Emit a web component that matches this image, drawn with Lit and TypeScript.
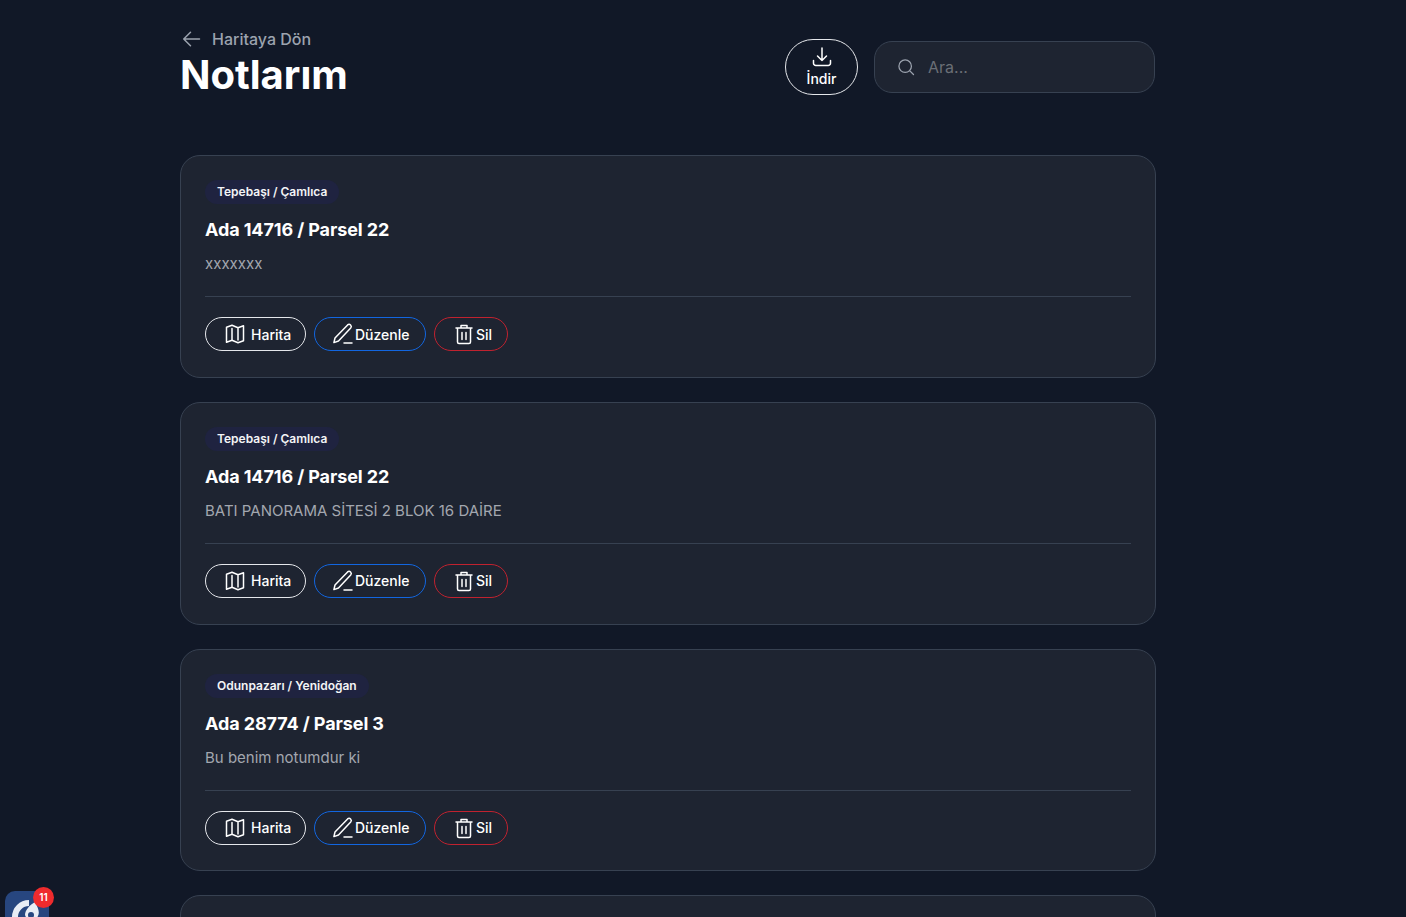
import { LitElement, html, css, svg } from 'lit';
import { customElement, property } from 'lit/decorators.js';

interface Note {
  district: string;
  title: string;
  body: string;
}

const NOTES: Note[] = [
  { district: 'Tepebaşı / Çamlıca', title: 'Ada 14716 / Parsel 22', body: 'xxxxxxx' },
  { district: 'Tepebaşı / Çamlıca', title: 'Ada 14716 / Parsel 22', body: 'BATI PANORAMA SİTESİ 2 BLOK 16 DAİRE' },
  { district: 'Odunpazarı / Yenidoğan', title: 'Ada 28774 / Parsel 3', body: 'Bu benim notumdur ki' },
  { district: 'Tepebaşı / Çamlıca', title: 'Ada 14716 / Parsel 22', body: 'xxxxxxx' },
];

const icon = (size: number, body: unknown) => html`<svg
  width=${size}
  height=${size}
  viewBox="0 0 24 24"
  fill="none"
  stroke="currentColor"
  stroke-width="1.5"
  stroke-linecap="round"
  stroke-linejoin="round"
>${body}</svg>`;

const arrowLeft = svg`<path d="M19.5 12h-15M10.5 5.25 3.75 12l6.75 6.75" />`;
const download = svg`<path d="M3.5 15.5v2.75A2.25 2.25 0 0 0 5.75 20.5h12.5a2.25 2.25 0 0 0 2.25-2.25V15.5M12 3v12.5M7.5 11l4.5 4.5 4.5-4.5" />`;
const search = svg`<path d="m21 21-4.7-4.7M18.5 11a7.5 7.5 0 1 1-15 0 7.5 7.5 0 0 1 15 0Z" />`;
const map = svg`<path d="M9 6.5V18M15 6v12M3.5 5.2 9 3.3l6 2.4 5.5-1.9v15l-5.5 1.9-6-2.4-5.5 1.9Z" />`;
const pencil = svg`<path d="M16.6 2.9a2.2 2.2 0 0 1 3.1 3.1L7.5 19l-4.6 1.6L4 16ZM13 21h8" />`;
const trash = svg`<path d="M4 6h16M9 6V3.5h6V6M5.5 6v14a1.5 1.5 0 0 0 1.5 1.5h10a1.5 1.5 0 0 0 1.5-1.5V6M10 10.5v7M14 10.5v7" />`;

@customElement('note-card')
export class NoteCard extends LitElement {
  static styles = css`
    :host {
      display: block;
    }

    .card {
      box-sizing: border-box;
      height: 222.75px;
      padding: 24px;
      background: #1e2431;
      border: 1px solid #374151;
      border-radius: 20px;
    }

    .tag {
      display: inline-block;
      padding: 0 12px;
      height: 24px;
      line-height: 24px;
      border-radius: 12px;
      background: #1f2340;
      color: #f3f4f6;
      font-size: 12px;
      font-weight: 600;
    }

    h2 {
      margin: 12px 0 0;
      font-size: 18px;
      line-height: 28px;
      font-weight: 700;
      color: #fff;
      letter-spacing: -0.1px;
    }

    p {
      margin: 8px 0 0;
      font-size: 15px;
      line-height: 24px;
      color: #a3a7af;
      height: 24px;
    }

    .actions {
      display: flex;
      gap: 8px;
      margin-top: 20px;
      padding-top: 20px;
      border-top: 1px solid #374151;
    }

    .btn {
      display: flex;
      align-items: center;
      box-sizing: border-box;
      height: 34px;
      border-radius: 17px;
      border: 1px solid #e5e7eb;
      color: #fff;
      font-size: 14px;
      font-weight: 500;
    }

    .btn.map {
      gap: 4px;
      width: 101px;
      padding-left: 17px;
    }

    .btn.edit {
      width: 112px;
      padding-left: 16px;
      border-color: #1266e0;
    }

    .btn.del {
      width: 74px;
      padding-left: 17px;
      border-color: #c0222f;
    }
  `;

  @property({ type: Object })
  note!: Note;

  render() {
    const { district, title, body } = this.note;
    return html`
      <div class="card">
        <span class="tag">${district}</span>
        <h2>${title}</h2>
        <p>${body}</p>
        <div class="actions">
          <div class="btn map">${icon(24, map)}Harita</div>
          <div class="btn edit">${icon(24, pencil)}Düzenle</div>
          <div class="btn del">${icon(24, trash)}Sil</div>
        </div>
      </div>
    `;
  }
}

@customElement('app-root')
export class AppRoot extends LitElement {
  static styles = css`
    :host {
      display: block;
      height: 917px;
      overflow: hidden;
      position: relative;
      background: #111827;
      font-family: Inter, 'Liberation Sans', sans-serif;
    }

    .page {
      width: 976px;
      margin-left: 180px;
    }

    header {
      display: flex;
      justify-content: space-between;
      height: 155px;
      box-sizing: border-box;
      padding-right: 1px;
    }

    .back {
      display: flex;
      align-items: center;
      gap: 8px;
      margin-top: 27px;
      height: 24px;
      color: #9ca3af;
      font-size: 16px;
      font-weight: 500;
    }

    .back svg {
      margin-left: 0;
    }

    h1 {
      margin: 0;
      font-size: 40px;
      line-height: 48px;
      font-weight: 700;
      color: #fff;
    }

    .tools {
      display: flex;
      align-items: center;
      gap: 16px;
      height: 56px;
      margin-top: 39px;
    }

    .download {
      display: flex;
      flex-direction: column;
      align-items: center;
      justify-content: center;
      box-sizing: border-box;
      width: 73px;
      height: 56px;
      border: 1px solid #e5e7eb;
      border-radius: 28px;
      color: #fff;
      font-size: 14px;
      font-weight: 500;
      line-height: 20px;
    }

    .search {
      display: flex;
      align-items: center;
      gap: 12px;
      box-sizing: border-box;
      width: 281px;
      height: 52px;
      padding-left: 21px;
      background: #1e2431;
      border: 1px solid #374151;
      border-radius: 18px;
      color: #9ca3af;
    }

    .search span {
      color: #6b6f76;
      font-size: 16px;
    }

    .list {
      display: flex;
      flex-direction: column;
      gap: 24px;
    }

    .widget {
      position: absolute;
      left: 5px;
      top: 891px;
      width: 44px;
      height: 44px;
      border-radius: 10px;
      background: #27467f;
      overflow: hidden;
    }

    .badge {
      position: absolute;
      left: 33px;
      top: 887px;
      width: 21px;
      height: 21px;
      border-radius: 50%;
      background: #ef2b2d;
      color: #fff;
      font-size: 10px;
      font-weight: 600;
      line-height: 21px;
      text-align: center;
    }
  `;

  render() {
    return html`
      <div class="page">
        <header>
          <div>
            <div class="back">${icon(24, arrowLeft)}Haritaya Dön</div>
            <h1>Notlarım</h1>
          </div>
          <div class="tools">
            <div class="download">${icon(24, download)}İndir</div>
            <div class="search">${icon(20, search)}<span>Ara...</span></div>
          </div>
        </header>
        <div class="list">
          ${NOTES.map((n) => html`<note-card .note=${n}></note-card>`)}
        </div>
      </div>
      <div class="widget">
        <svg width="44" height="44" viewBox="0 0 44 44" fill="none">
          <path d="M10 26a14 14 0 0 1 14-14" stroke="#e8edf5" stroke-width="6" />
          <path d="M30 11c3 6 5 10 3 14a7 7 0 0 1-13-1c0-5 5-10 10-13Z" fill="#e8edf5" />
          <circle cx="26" cy="24" r="3" fill="#27467f" />
        </svg>
      </div>
      <div class="badge">11</div>
    `;
  }
}

declare global {
  interface HTMLElementTagNameMap {
    'app-root': AppRoot;
    'note-card': NoteCard;
  }
}
